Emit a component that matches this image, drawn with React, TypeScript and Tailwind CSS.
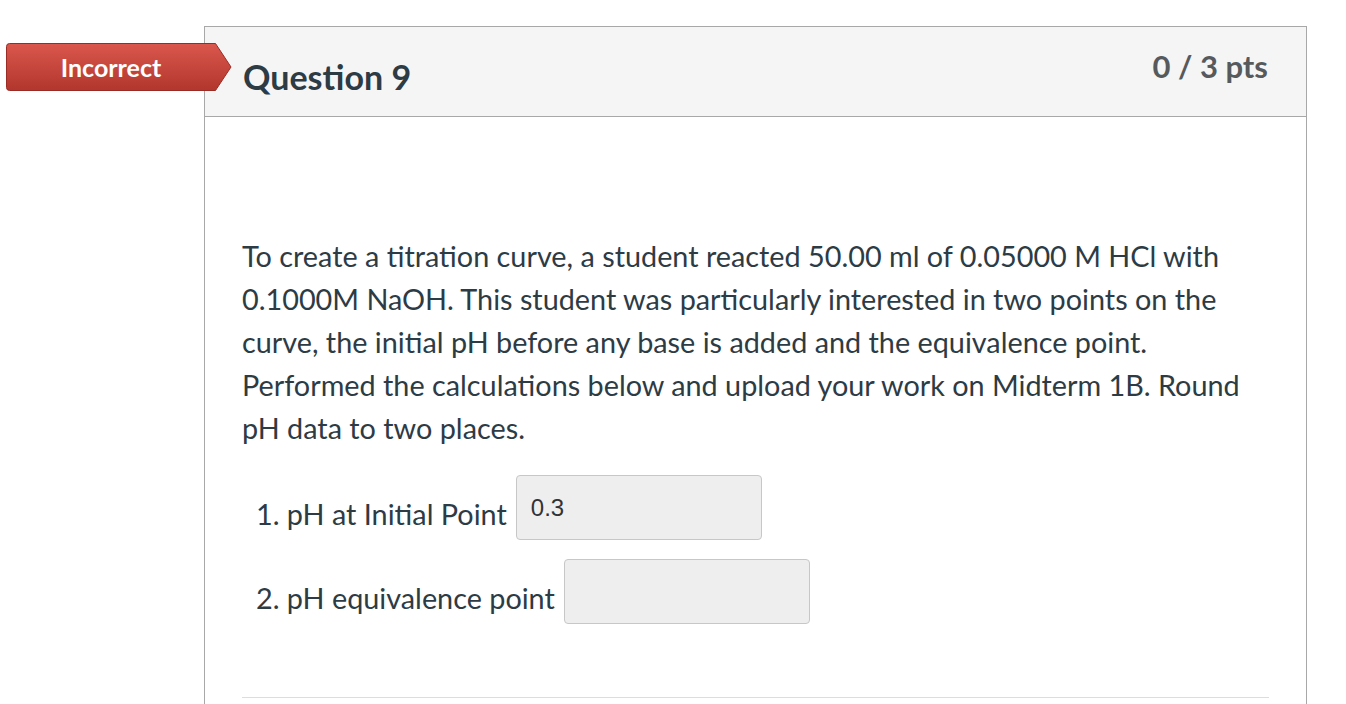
/* Quiz result: single question card with "Incorrect" badge */
function IncorrectBadge() {
    return (
        <div className="absolute left-[6px] top-[43px] h-[48px] w-[226px]">
            <svg className="absolute inset-0" width="226" height="48" viewBox="0 0 226 48">
                <defs>
                    <linearGradient id="badgeFill" x1="0" y1="0" x2="0" y2="1">
                        <stop offset="0" stopColor="#da574d" />
                        <stop offset="1" stopColor="#b2362d" />
                    </linearGradient>
                </defs>
                <path
                    d="M3.5 0.5 H209.5 L225 24 L209.5 47.5 H3.5 Q0.5 47.5 0.5 44.5 V3.5 Q0.5 0.5 3.5 0.5 Z"
                    fill="url(#badgeFill)"
                    stroke="#9b2c25"
                    strokeWidth="1"
                />
            </svg>
            <div className="relative flex h-full w-[210px] items-center justify-center pt-[1px] text-[25px] font-bold text-white">
                Incorrect
            </div>
        </div>
    );
}

function AnswerRow({ label, value }: { label: string; value?: string }) {
    return (
        <div className="flex items-start gap-[9px]">
            <span className="mt-[18px]">{label}</span>
            <div className="h-[65px] w-[246px] rounded-[4px] border border-[#c7c7c7] bg-[#eeeeee] pl-[14px] pt-[20px] font-['Liberation_Sans',Arial,sans-serif] text-[24px] leading-none text-[#333]">
                {value}
            </div>
        </div>
    );
}

export default function App() {
    return (
        <div className="relative h-[704px] overflow-hidden bg-white font-['Lato','Open_Sans',sans-serif] text-[#2d3b45]">
            <div className="ml-[204px] mt-[26px] w-[1103px] border border-b-0 border-[#a8a8a8]">
                <div className="flex h-[90px] items-start justify-between border-b border-[#a8a8a8] bg-[#f5f5f5] px-[38px] pt-[24px]">
                    <h2 className="mt-[6px] text-[34px] font-bold leading-[40px]">Question 9</h2>
                    <span className="text-[31px] font-bold leading-[31px] text-[#565a5c]">0 / 3 pts</span>
                </div>
                <div className="px-[37px] pt-[118px] pb-[120px] text-[28.8px] leading-[43px]">
                    <p>
                        To create a titration curve, a student reacted 50.00 ml of 0.05000 M HCl with 0.1000M NaOH. This
                        student was particularly interested in two points on the curve, the initial pH before any base is
                        added and the equivalence point. Performed the calculations below and upload your work on Midterm
                        1B. Round pH data to two places.
                    </p>
                    <div className="mt-[25px] flex flex-col gap-[19px] pl-[14px]">
                        <AnswerRow label="1. pH at Initial Point" value="0.3" />
                        <AnswerRow label="2. pH equivalence point" />
                    </div>
                    <div className="mt-[73px] h-px bg-[#dddddd]" />
                </div>
            </div>
            <IncorrectBadge />
        </div>
    );
}
